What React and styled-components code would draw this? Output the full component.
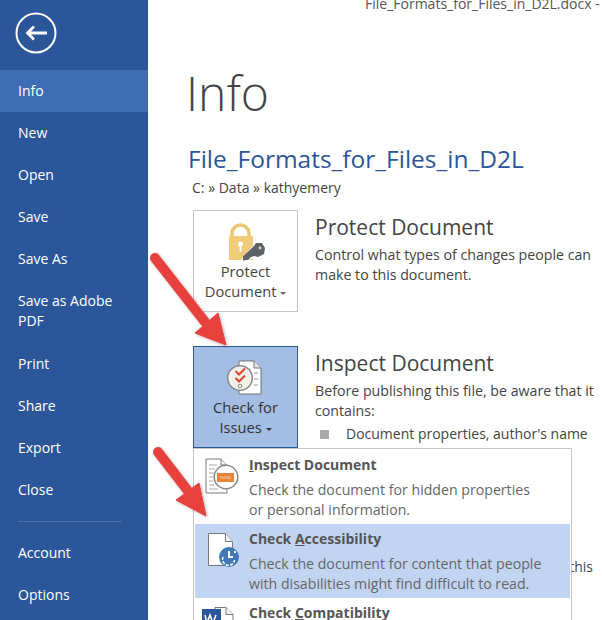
import React from 'react';
import styled, { createGlobalStyle } from 'styled-components';

const navTop = ['New', 'Open', 'Save', 'Save As'];
const navMid = ['Print', 'Share', 'Export', 'Close'];
const navEnd = ['Account', 'Options'];

function App() {
    return (
        <>
            <Global />
            <Page>
                <Sidebar>
                    <BackArea>
                        <svg width="42" height="42" viewBox="0 0 42 42">
                            <circle cx="21" cy="21" r="19.5" fill="none" stroke="#fff" strokeWidth="2" />
                            <path d="M32 21H13M19 14.5 12.5 21l6.5 6.5" fill="none" stroke="#fff" strokeWidth="2.8" />
                        </svg>
                    </BackArea>
                    <NavItem active>Info</NavItem>
                    {navTop.map(n => <NavItem key={n}>{n}</NavItem>)}
                    <TallItem>Save as Adobe PDF</TallItem>
                    {navMid.map(n => <NavItem key={n}>{n}</NavItem>)}
                    <Divider />
                    {navEnd.map(n => <NavItem key={n}>{n}</NavItem>)}
                </Sidebar>
                <Main>
                    <FileBar>File_Formats_for_Files_in_D2L.docx -</FileBar>
                    <Title>Info</Title>
                    <DocName>File_Formats_for_Files_in_D2L</DocName>
                    <Crumbs>C: » Data » kathyemery</Crumbs>
                    <Section>
                        <BigButton>
                            <ButtonIcon>
                                <svg width="42" height="38" viewBox="0 0 42 38">
                                    <path d="M7 14V10.5a8.5 8.5 0 0 1 17 0V14" fill="none" stroke="#eac672" strokeWidth="3.5" />
                                    <rect x="4" y="13" width="24" height="24" fill="#efcb7a" />
                                    <circle cx="15.5" cy="21" r="2.6" fill="#fff" />
                                    <rect x="14.6" y="22" width="1.8" height="7" fill="#fff" />
                                    <path d="M15 38 30 20l9 1 3 8-6 6-7 0-9 3z" fill="#fff" />
                                    <path d="M18 37v-3.5L29 23l2-3 6 0 3 5-1 6-6 3-4-1-3 1-3 3-3 0-1 1z" fill="#5f6266" />
                                    <circle cx="35" cy="25" r="1.4" fill="#d8d8d8" />
                                </svg>
                            </ButtonIcon>
                            <ButtonLabel>Protect<br />Document <Caret /></ButtonLabel>
                        </BigButton>
                        <SectionBody>
                            <SectionTitle>Protect Document</SectionTitle>
                            <SectionText>Control what types of changes people can make to this document.</SectionText>
                        </SectionBody>
                    </Section>
                    <Section second>
                        <BigButton active>
                            <ButtonIcon>
                                <svg width="42" height="38" viewBox="0 0 42 38">
                                    <path d="M14 2h15l7 7v26H14z" fill="#fff" stroke="#6f7276" />
                                    <path d="M29 2v7h7" fill="#e6e6e6" stroke="#6f7276" />
                                    <path d="M29 14h4M29 20h4M29 26h4" stroke="#9a9a9a" />
                                    <circle cx="15" cy="19" r="12.3" fill="#f5f2ec" stroke="#85878a" strokeWidth="1.5" />
                                    <path d="M10.5 12l3.5 3.5 6-6M10.5 19l3.5 3.5 6-6" fill="none" stroke="#d9472b" strokeWidth="2" />
                                    <circle cx="15" cy="27" r="1.8" fill="none" stroke="#85878a" />
                                </svg>
                            </ButtonIcon>
                            <ButtonLabel dark>Check for<br />Issues <Caret dark /></ButtonLabel>
                        </BigButton>
                        <SectionBody>
                            <SectionTitle>Inspect Document</SectionTitle>
                            <SectionText>Before publishing this file, be aware that it contains:</SectionText>
                            <Bullet>Document properties, author's name</Bullet>
                            <HiddenLine>this</HiddenLine>
                        </SectionBody>
                    </Section>
                </Main>
                <Menu>
                    <MenuItem>
                        <MenuIcon>
                            <svg width="36" height="36" viewBox="0 0 36 36">
                                <path d="M1 1h15l6 6v28H1z" fill="#fff" stroke="#77797c" />
                                <path d="M16 1v6h6" fill="#f0f0f0" stroke="#77797c" />
                                <path d="M4 7h8M4 11h6M4 15h5M4 19h4M4 23h4M4 27h5M4 31h9" stroke="#a8a8a8" />
                                <circle cx="21" cy="19" r="11.8" fill="#fff" stroke="#8b8b8b" strokeWidth="1.5" />
                                <rect x="12" y="15" width="17" height="9" fill="#e8833a" />
                                <rect x="15" y="18" width="11" height="3" fill="#f0a56c" />
                            </svg>
                        </MenuIcon>
                        <MenuText>
                            <MenuTitle><u>I</u>nspect Document</MenuTitle>
                            <MenuDesc>Check the document for hidden properties<br />or personal information.</MenuDesc>
                        </MenuText>
                    </MenuItem>
                    <MenuItem active>
                        <MenuIcon>
                            <svg width="36" height="36" viewBox="0 0 36 36">
                                <path d="M3.5 1.5h17l7 8v24h-24z" fill="#fff" stroke="#77797c" />
                                <path d="M20.5 1.5v8h7" fill="#f4f4f4" stroke="#77797c" />
                                <circle cx="24" cy="25" r="10" fill="#3f78b5" />
                                <path d="M24 19v6h4" fill="none" stroke="#fff" strokeWidth="2" />
                                <path d="M18 25a6 6 0 1 0 11.5 3" fill="none" stroke="#fff" strokeWidth="1.6" strokeDasharray="3 1.4" />
                                <circle cx="30" cy="20" r="1.2" fill="#fff" />
                            </svg>
                        </MenuIcon>
                        <MenuText>
                            <MenuTitle>Check <u>A</u>ccessibility</MenuTitle>
                            <MenuDesc>Check the document for content that people<br />with disabilities might find difficult to read.</MenuDesc>
                        </MenuText>
                    </MenuItem>
                    <MenuItem>
                        <MenuIcon>
                            <CompatIcon width="36" height="36" viewBox="0 0 36 36">
                                <path d="M10 1.5h11l7 7v26H10z" fill="#fff" stroke="#77797c" />
                                <path d="M21 1.5v7h7" fill="#f4f4f4" stroke="#77797c" />
                                <rect x="-3" y="3" width="19" height="18" fill="#2b579a" />
                                <path d="M0 9l2 8 3-8 3 8 3-8" fill="none" stroke="#fff" strokeWidth="1.5" />
                            </CompatIcon>
                        </MenuIcon>
                        <MenuText>
                            <MenuTitle>Check <u>C</u>ompatibility</MenuTitle>
                        </MenuText>
                    </MenuItem>
                </Menu>
                <Arrows width="602" height="620" viewBox="0 0 602 620">
                    <defs>
                        <filter id="soft" x="-20%" y="-20%" width="140%" height="140%">
                            <feDropShadow dx="1" dy="1" stdDeviation="1.5" floodColor="#000" floodOpacity="0.3" />
                        </filter>
                    </defs>
                    <g filter="url(#soft)" fill="#e8413e" stroke="#e8413e">
                        <path d="M155 258 205 322" strokeWidth="10" strokeLinecap="round" />
                        <path d="M226 345 195 333 218 313z" strokeWidth="1" />
                        <path d="M158 452 188 491" strokeWidth="10" strokeLinecap="round" />
                        <path d="M206 516 176 500 199 483z" strokeWidth="1" />
                    </g>
                </Arrows>
            </Page>
        </>
    );
}

const Global = createGlobalStyle`
    html, body {
        margin: 0;
        background: #fff;
        overflow: hidden;
    }
    * {
        box-sizing: border-box;
    }
`;

const Page = styled.div`
    position: relative;
    display: flex;
    width: 602px;
    height: 620px;
    overflow: hidden;
    font-family: "Open Sans", "Noto Sans", sans-serif;
    color: #444;
`;

const Sidebar = styled.nav`
    width: 148px;
    flex: none;
    background: #2b579a;
    color: #fff;
`;

const BackArea = styled.div`
    height: 70px;
    padding: 12px 0 0 15px;
`;

const NavItem = styled.div`
    height: 42px;
    line-height: 42px;
    padding-left: 18px;
    font-size: 14px;
    background: ${props => props.active ? '#3e6db5' : 'transparent'};
`;

const TallItem = styled.div`
    height: 63px;
    padding: 11px 10px 0 18px;
    font-size: 14px;
    line-height: 20px;
`;

const Divider = styled.div`
    height: 1px;
    margin: 10px 26px 10px 18px;
    background: #4a74b4;
`;

const Main = styled.main`
    flex: 1;
    min-width: 0;
    padding-left: 40px;
`;

const FileBar = styled.div`
    height: 12px;
    margin: -6px -20px 0 177px;
    line-height: 20px;
    font-size: 14px;
    white-space: nowrap;
    color: #555;
`;

const Title = styled.h1`
    margin: 51px 0 0 -2px;
    height: 72px;
    line-height: 72px;
    font-size: 48px;
    font-weight: 300;
    color: #444;
`;

const DocName = styled.div`
    margin-top: 14px;
    height: 32px;
    line-height: 32px;
    font-size: 24.5px;
    color: #2b579a;
    white-space: nowrap;
`;

const Crumbs = styled.div`
    margin: 3px 0 0 4px;
    height: 20px;
    line-height: 20px;
    font-size: 14px;
`;

const Section = styled.section`
    display: flex;
    gap: 17px;
    margin: ${props => props.second ? '34px' : '12px'} 0 0 5px;
`;

const BigButton = styled.div`
    flex: none;
    width: 105px;
    height: 102px;
    padding-top: 12px;
    text-align: center;
    border: 1px solid ${props => props.active ? '#2b579a' : '#c6c6c6'};
    background: ${props => props.active ? '#a3bde3' : '#fff'};
`;

const ButtonIcon = styled.div`
    height: 38px;
    line-height: 0;
`;

const ButtonLabel = styled.div`
    font-size: 14.7px;
    line-height: 20px;
    color: ${props => props.dark ? '#333' : '#444'};
`;

const Caret = styled.span`
    display: inline-block;
    vertical-align: middle;
    border: 3px solid transparent;
    border-top-color: ${props => props.dark ? '#333' : '#666'};
    border-bottom: 0;
`;

const SectionBody = styled.div`
    width: 300px;
    flex: none;
`;

const SectionTitle = styled.h2`
    margin: 1px 0 0;
    height: 34px;
    line-height: 32px;
    font-size: 21px;
    font-weight: 400;
    white-space: nowrap;
`;

const SectionText = styled.p`
    margin: 0;
    font-size: 14.2px;
    line-height: 20px;
`;

const Bullet = styled.div`
    display: flex;
    align-items: center;
    gap: 17px;
    margin: 3px 0 0 5px;
    font-size: 14px;
    line-height: 20px;
    white-space: nowrap;

    &:before {
        content: "";
        width: 9px;
        height: 9px;
        flex: none;
        background: #aaa;
    }
`;

const HiddenLine = styled.div`
    margin-top: 113px;
    text-align: right;
    padding-right: 22px;
    font-size: 14px;
    line-height: 20px;
`;

const Menu = styled.div`
    position: absolute;
    left: 193px;
    top: 448px;
    width: 379px;
    height: 190px;
    padding: 1px;
    background: #fff;
    border: 1px solid #c6c6c6;
`;

const MenuItem = styled.div`
    display: flex;
    height: 74px;
    padding: 5px 0 0 10px;
    background: ${props => props.active ? '#c1d4f1' : 'transparent'};
`;

const MenuIcon = styled.div`
    width: 44px;
    flex: none;
    padding-top: 3px;
    line-height: 0;
`;

const CompatIcon = styled.svg`
    overflow: visible;
`;

const MenuText = styled.div`
    color: #666;
`;

const MenuTitle = styled.div`
    font-size: 14px;
    line-height: 20px;
    font-weight: 700;
    color: #555;
`;

const MenuDesc = styled.div`
    margin-top: 5px;
    font-size: 14.15px;
    line-height: 20px;
    white-space: nowrap;
`;

const Arrows = styled.svg`
    position: absolute;
    left: 0;
    top: 0;
    pointer-events: none;
`;

export default App;
